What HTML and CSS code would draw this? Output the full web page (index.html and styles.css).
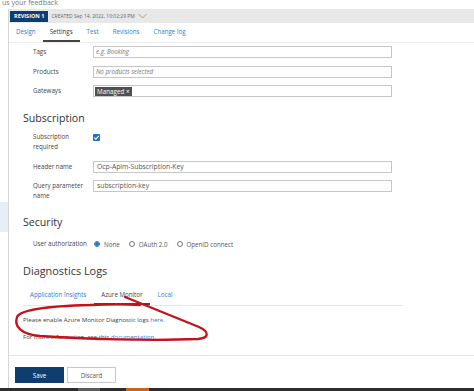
FILE: index.html
```html
<!DOCTYPE html>
<html lang="en">
<head>
    <meta charset="UTF-8">
    <title>API Settings</title>
    <link rel="stylesheet" href="styles.css">
</head>
<body>
    <div class="feedback">us your feedback</div>

    <div class="shell">
        <!-- Left nav edge -->
        <div class="nav-edge">
            <div class="nav-selected"></div>
        </div>

        <div class="main">
            <!-- Revision bar -->
            <div class="revision-bar">
                <span class="revision-badge">REVISION 1</span>
                <span class="created">CREATED Sep 14, 2022, 10:02:29 PM</span>
                <svg class="chevron" width="9" height="6" viewBox="0 0 9 6"><path d="M0.5 1 L4.5 5 L8.5 1" fill="none" stroke="#8a8a8a" stroke-width="0.8"/></svg>
            </div>

            <!-- Tabs -->
            <div class="tabs">
                <span class="tab">Design</span>
                <span class="tab active">Settings</span>
                <span class="tab">Test</span>
                <span class="tab">Revisions</span>
                <span class="tab">Change log</span>
            </div>

            <div class="content">
                <div class="form-row">
                    <label class="form-label">Tags</label>
                    <div class="input placeholder">e.g. Booking</div>
                </div>
                <div class="form-row">
                    <label class="form-label">Products</label>
                    <div class="input placeholder">No products selected</div>
                </div>
                <div class="form-row">
                    <label class="form-label">Gateways</label>
                    <div class="input"><span class="chip">Managed &times;</span></div>
                </div>

                <h2 class="section-title">Subscription</h2>
                <div class="form-row tall">
                    <label class="form-label">Subscription required</label>
                    <span class="checkbox">
                        <svg width="7" height="7" viewBox="0 0 7 7"><path d="M1.3 3.6 L2.9 5.1 L5.8 1.9" fill="none" stroke="#fff" stroke-width="1.1"/></svg>
                    </span>
                </div>
                <div class="form-row">
                    <label class="form-label">Header name</label>
                    <div class="input value">Ocp-Apim-Subscription-Key</div>
                </div>
                <div class="form-row tall">
                    <label class="form-label">Query parameter name</label>
                    <div class="input value">subscription-key</div>
                </div>

                <h2 class="section-title security">Security</h2>
                <div class="form-row">
                    <label class="form-label">User authorization</label>
                    <div class="radios">
                        <span class="radio checked"></span><span class="radio-text">None</span>
                        <span class="radio"></span><span class="radio-text">OAuth 2.0</span>
                        <span class="radio"></span><span class="radio-text">OpenID connect</span>
                    </div>
                </div>

                <h2 class="section-title diag">Diagnostics Logs</h2>
                <div class="sub-tabs">
                    <span class="sub-tab">Application Insights</span>
                    <span class="sub-tab active">Azure Monitor</span>
                    <span class="sub-tab">Local</span>
                </div>
                <p class="note first">Please enable Azure Monitor Diagnostic logs <a href="#">here.</a></p>
                <p class="note">For more information, see this <a href="#">documentation</a>.</p>
            </div>

            <div class="actions">
                <button class="btn btn-save">Save</button>
                <button class="btn btn-discard">Discard</button>
            </div>
        </div>
    </div>

    <!-- Taskbar strip -->
    <div class="taskbar">
        <span class="task-gray"></span>
        <span class="task-orange"></span>
    </div>

    <!-- Red hand-drawn annotation -->
    <svg class="annotation" width="474" height="391" viewBox="0 0 474 391">
        <path d="M125 297 L199 327 C210 332 209 338 198 339 C150 341 80 339 40 336 C20 334 14 326 17 317 C21 309 50 306 90 305 C110 304 125 304 140 305" fill="none" stroke="#c4121a" stroke-width="2.3" stroke-linecap="round"/>
    </svg>
</body>
</html>
```

FILE: styles.css
```css
* {
    margin: 0;
    padding: 0;
    box-sizing: border-box;
}

body {
    width: 474px;
    height: 391px;
    overflow: hidden;
    background-color: #fff;
    font-family: "Open Sans", "Noto Sans", sans-serif;
    color: #444;
    position: relative;
}

.feedback {
    height: 9px;
    overflow: hidden;
    padding-left: 2px;
    font-size: 7px;
    line-height: 5px;
    color: #777;
}

.shell {
    display: flex;
    height: 379px;
}

.nav-edge {
    width: 8px;
    padding-top: 193px;
}

.nav-selected {
    height: 30px;
    background-color: #e6eef8;
}

.main {
    flex: 1;
    border-left: 1px solid #d6d6d6;
    display: flex;
    flex-direction: column;
}

/* Revision bar */
.revision-bar {
    height: 14px;
    background-color: #e8e8e8;
    display: flex;
    align-items: center;
    padding-left: 1px;
}

.revision-badge {
    background-color: #0f3d6e;
    color: #fff;
    font-size: 5.5px;
    font-weight: 700;
    height: 11px;
    line-height: 11px;
    padding: 0 4px;
}

.created {
    font-size: 5px;
    color: #666;
    margin-left: 3px;
}

.chevron {
    margin-left: 3px;
}

/* Tabs */
.tabs {
    display: flex;
    height: 20px;
    border-bottom: 1px solid #ececec;
}

.tab {
    font-size: 6.2px;
    color: #2f7bd2;
    padding: 0 7px;
    line-height: 17px;
}

.tab.active {
    color: #333;
    border-bottom: 2px solid #444;
}

/* Form */
.content {
    flex: 1;
    display: flex;
    flex-direction: column;
    padding: 3px 0 0 14px;
}

.form-row {
    display: flex;
    align-items: flex-start;
    padding-left: 10px;
    margin-bottom: 7.5px;
}

.form-row.tall {
    margin-bottom: 8.5px;
}

.form-label {
    width: 60px;
    flex-shrink: 0;
    font-size: 6.2px;
    line-height: 10px;
    padding-top: 1px;
    padding-right: 4px;
    color: #444;
}

.input {
    width: 299px;
    height: 12px;
    border: 1px solid #c6c6c6;
    line-height: 10px;
    padding-left: 2px;
    display: flex;
    align-items: center;
}

.input.placeholder {
    font-size: 6.2px;
    font-style: italic;
    color: #777;
}

.input.value {
    font-size: 6.8px;
    color: #555;
    padding-left: 3px;
}

.chip {
    background-color: #505050;
    color: #fff;
    font-size: 6.3px;
    line-height: 9px;
    padding: 0 2px;
    margin-left: -1px;
}

.section-title {
    font-size: 10.6px;
    font-weight: 400;
    color: #333;
    height: 16px;
    line-height: 16px;
    margin-top: 5px;
    margin-bottom: 5.5px;
}

.section-title.security {
    margin-top: 4px;
    margin-bottom: 8.5px;
}

.section-title.diag {
    font-size: 10.9px;
    margin-top: 5px;
    margin-bottom: 0;
}

.checkbox {
    width: 7px;
    height: 7px;
    background-color: #1e6fce;
    border-radius: 1px;
    display: flex;
    margin-top: 2.5px;
}

.radios {
    display: flex;
    align-items: center;
    height: 12px;
    padding-left: 1px;
}

.radio {
    width: 6px;
    height: 6px;
    border: 1px solid #777;
    border-radius: 50%;
}

.radio.checked {
    border-color: #1e6fce;
    background: radial-gradient(circle, #1e6fce 55%, #fff 60%);
}

.radio-text {
    font-size: 6.2px;
    color: #555;
    margin-left: 4px;
    margin-right: 9px;
}

/* Diagnostics tabs */
.sub-tabs {
    display: flex;
    width: 380px;
    border-bottom: 1px solid #e6e6e6;
    margin-top: 8.5px;
}

.sub-tab {
    font-size: 6.2px;
    color: #2f7bd2;
    padding: 0 7px;
    line-height: 16px;
}

.sub-tab.active {
    color: #444;
    border-bottom: 2px solid #444;
    margin: 0 1px;
}

.note {
    font-size: 6.1px;
    color: #444;
    line-height: 17px;
}

.note.first {
    margin-top: 4.5px;
}

.note a {
    color: #2f7bd2;
    text-decoration: none;
}

/* Buttons */
.actions {
    border-top: 1px solid #e4e4e4;
    height: 33px;
    padding: 11px 0 0 6px;
    display: flex;
    gap: 3px;
}

.btn {
    width: 49px;
    height: 16px;
    font-family: inherit;
    font-size: 6.2px;
}

.btn-save {
    background-color: #0f3d6e;
    color: #fff;
    border: none;
}

.btn-discard {
    background-color: #fff;
    color: #555;
    border: 1px solid #c8c8c8;
}

/* Bottom taskbar */
.taskbar {
    height: 3px;
    background-color: #2d2d2d;
    display: flex;
    position: absolute;
    left: 0;
    right: 0;
    bottom: 0;
}

.task-gray {
    width: 22px;
    margin-left: 78px;
    background-color: #5c5c5c;
}

.task-orange {
    width: 23px;
    margin-left: 26px;
    background-color: #c8641c;
}

.annotation {
    position: absolute;
    left: 0;
    top: 0;
    pointer-events: none;
}
```
